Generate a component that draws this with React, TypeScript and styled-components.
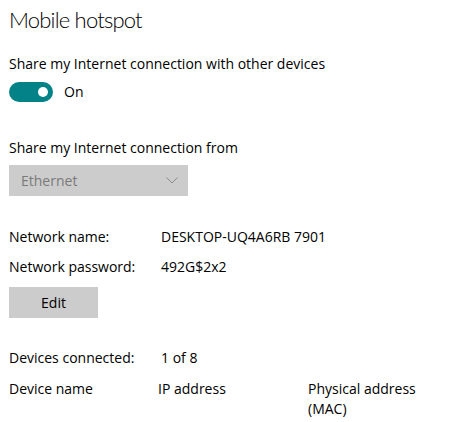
import React from "react";
import styled, { createGlobalStyle } from "styled-components";

const Global = createGlobalStyle`
  html, body { margin: 0; padding: 0; background: #fff; }
  body { font-family: "Open Sans", "Noto Sans", sans-serif; color: #000; }
`;

const Page = styled.div`
  padding: 4px 0 0 9px;
  display: flex;
  flex-direction: column;
  font-size: 14px;
  line-height: 20px;
`;

const Title = styled.h1`
  margin: 0;
  font-family: Lato, "Open Sans", sans-serif;
  font-size: 22px;
  letter-spacing: -0.8px;
  font-weight: 300;
  line-height: 32px;
`;

const Label = styled.div<{ $mt?: number }>`
  margin-top: ${(p) => p.$mt ?? 0}px;
`;

const ToggleRow = styled.div`
  display: flex;
  align-items: center;
  gap: 11px;
  margin-top: 8px;
`;

const Track = styled.div`
  width: 44px;
  height: 20px;
  border-radius: 10px;
  background: #038387;
  position: relative;
`;

const Knob = styled.div`
  position: absolute;
  right: 5px;
  top: 5px;
  width: 10px;
  height: 10px;
  border-radius: 50%;
  background: #fff;
`;

const Select = styled.div`
  margin-top: 7px;
  width: 179px;
  height: 31px;
  background: #cccccc;
  color: #7a7a7a;
  display: flex;
  align-items: center;
  justify-content: space-between;
  padding: 0 10px 0 12px;
  box-sizing: border-box;
`;

const InfoRow = styled.div<{ $mt?: number }>`
  display: grid;
  grid-template-columns: 152px 1fr;
  margin-top: ${(p) => p.$mt ?? 0}px;
`;

const Button = styled.button`
  margin-top: 10px;
  width: 89px;
  height: 31px;
  border: none;
  background: #cccccc;
  font: inherit;
  color: #000;
  padding: 0;
`;

const TableHead = styled.div`
  display: grid;
  grid-template-columns: 149px 150px 140px;
  margin-top: 11px;
`;

export default function App() {
  return (
    <>
      <Global />
      <Page>
        <Title>Mobile hotspot</Title>
        <Label $mt={18}>Share my Internet connection with other devices</Label>
        <ToggleRow>
          <Track>
            <Knob />
          </Track>
          <span>On</span>
        </ToggleRow>
        <Label $mt={36}>Share my Internet connection from</Label>
        <Select>
          <span>Ethernet</span>
          <svg width="12" height="7" viewBox="0 0 12 7">
            <path d="M0.5 0.5 L6 6 L11.5 0.5" fill="none" stroke="#8a8a8a" strokeWidth="1" />
          </svg>
        </Select>
        <InfoRow $mt={31}>
          <span>Network name:</span>
          <span>DESKTOP-UQ4A6RB 7901</span>
        </InfoRow>
        <InfoRow $mt={10}>
          <span>Network password:</span>
          <span>492G$2x2</span>
        </InfoRow>
        <Button>Edit</Button>
        <InfoRow $mt={30}>
          <span>Devices connected:</span>
          <span>1 of 8</span>
        </InfoRow>
        <TableHead>
          <span>Device name</span>
          <span>IP address</span>
          <span>Physical address (MAC)</span>
        </TableHead>
      </Page>
    </>
  );
}
